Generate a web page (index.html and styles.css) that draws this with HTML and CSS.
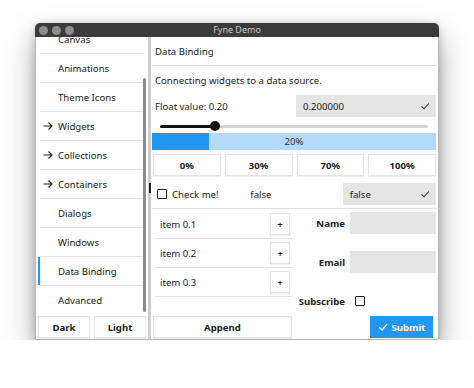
FILE: index.html
```
<!DOCTYPE html>
<html>
<head>
<meta charset="utf-8">
<link rel="stylesheet" href="styles.css">
</head>
<body>
<div class="stage">
  <div class="window">
    <div class="titlebar">
      <div class="lights"><span class="light"></span><span class="light"></span><span class="light"></span></div>
      <div class="title">Fyne Demo</div>
      <div></div>
    </div>
    <div class="main">
      <div class="sidebar">
        <div class="navlist">
          <div class="navinner">
            <div class="item">Canvas</div>
            <div class="item">Animations</div>
            <div class="item">Theme Icons</div>
            <div class="item"><svg class="arrow" viewBox="0 0 10 10"><path d="M0.5 5H9M5.5 1.5L9 5L5.5 8.5"/></svg>Widgets</div>
            <div class="item"><svg class="arrow" viewBox="0 0 10 10"><path d="M0.5 5H9M5.5 1.5L9 5L5.5 8.5"/></svg>Collections</div>
            <div class="item"><svg class="arrow" viewBox="0 0 10 10"><path d="M0.5 5H9M5.5 1.5L9 5L5.5 8.5"/></svg>Containers</div>
            <div class="item">Dialogs</div>
            <div class="item">Windows</div>
            <div class="item selected">Data Binding</div>
            <div class="item">Advanced</div>
          </div>
          <div class="scrollbar"></div>
        </div>
        <div class="themebtns">
          <div class="btn">Dark</div>
          <div class="btn">Light</div>
        </div>
      </div>
      <div class="divider"><span class="handle"></span></div>
      <div class="content">
        <div class="hdr">Data Binding</div>
        <div class="intro">Connecting widgets to a data source.</div>
        <div class="floatrow">
          <span class="lbl">Float value: 0.20</span>
          <div class="entry floatentry"><span>0.200000</span><svg class="check" viewBox="0 0 10 10"><path d="M1.5 5.3L4 7.8L8.8 2.5"/></svg></div>
        </div>
        <div class="slider">
          <div class="track"><div class="trackfill" style="width:20%"></div><div class="thumb"></div></div>
        </div>
        <div class="progress"><div class="progfill" style="width:20%"></div><span class="progtext">20%</span></div>
        <div class="pctbtns">
          <div class="btn">0%</div>
          <div class="btn">30%</div>
          <div class="btn">70%</div>
          <div class="btn">100%</div>
        </div>
        <div class="checkrow">
          <div class="checkcell"><span class="box"></span><span>Check me!</span></div>
          <div class="falselbl">false</div>
          <div class="entry"><span>false</span><svg class="check" viewBox="0 0 10 10"><path d="M1.5 5.3L4 7.8L8.8 2.5"/></svg></div>
        </div>
        <div class="sep"></div>
        <div class="lower">
          <div class="items">
            <div class="lrow"><span>item 0.1</span><div class="btn plus">+</div></div>
            <div class="lrow"><span>item 0.2</span><div class="btn plus">+</div></div>
            <div class="lrow"><span>item 0.3</span><div class="btn plus">+</div></div>
          </div>
          <div class="form">
            <div class="flabel">Name</div><div class="entry"></div>
            <div class="flabel">Email</div><div class="entry"></div>
            <div class="flabel">Subscribe</div><div class="subcell"><span class="box"></span></div>
          </div>
        </div>
        <div class="bottom">
          <div class="btn append">Append</div>
          <div class="submit"><svg class="subcheck" viewBox="0 0 10 10"><path d="M1.3 5.3L4 8L9 2.3"/></svg>Submit</div>
        </div>
      </div>
    </div>
  </div>
</div>
</body>
</html>
```
FILE: styles.css
```
html, body { margin: 0; padding: 0; background: #ffffff; }
body { font-family: "Noto Sans", "Open Sans", sans-serif; font-size: 9.6px; color: #222222; }

.stage { padding: 23px 0 0 35px; }

.window {
  width: 404px;
  height: 317px;
  display: flex;
  flex-direction: column;
  border-radius: 5px 5px 1px 1px;
  overflow: hidden;
  box-shadow: 0 14px 30px rgba(0,0,0,0.34), 0 2px 9px rgba(0,0,0,0.2);
}

.titlebar {
  height: 14px;
  background: #3b3b3b;
  display: grid;
  grid-template-columns: 1fr auto 1fr;
  align-items: center;
}
.lights { display: flex; gap: 4px; padding-left: 4px; }
.light { width: 9px; height: 9px; border-radius: 50%; background: #8d8d8d; }
.title { color: #c8c8c8; font-size: 9px; line-height: 14px; }

.main {
  flex: 1;
  display: flex;
  background: #ffffff;
  border: 1px solid #b8b8b8;
  border-top: none;
  min-height: 0;
}

.sidebar { width: 112px; display: flex; flex-direction: column; }
.navlist { position: relative; height: 275px; overflow: hidden; }
.navinner { margin-top: -12px; }
.item {
  height: 28px;
  margin: 0 4px;
  border-bottom: 1px solid #e3e3e3;
  display: flex;
  align-items: center;
  padding-left: 18px;
  position: relative;
  white-space: nowrap;
}
.item.selected::before {
  content: "";
  position: absolute;
  left: -2px; top: 0; bottom: 0;
  width: 2px;
  background: #2196f3;
}
.arrow { width: 10px; height: 10px; margin-left: -15px; margin-right: 5px; fill: none; stroke: #222; stroke-width: 1.2; }
.scrollbar {
  position: absolute;
  right: 2px; top: 41px; bottom: 0;
  width: 3px;
  border-radius: 2px;
  background: #8a8a8a;
}
.themebtns { display: flex; gap: 4px; padding: 4px 2px 0 2px; }
.themebtns .btn { flex: 1; height: 22px; }

.btn {
  box-sizing: border-box;
  background: #ffffff;
  border: 1px solid #e4e4e4;
  box-shadow: 0 1px 1px rgba(0,0,0,0.06);
  display: flex; align-items: center; justify-content: center;
  font-weight: bold;
  color: #222;
}

.divider { width: 3px; background: #cdcdcd; display: flex; align-items: center; justify-content: center; margin-right: 1px; }
.handle { width: 2px; height: 10px; background: #222; }

.content { flex: 1; display: flex; flex-direction: column; padding-right: 1px; min-width: 0; }
.hdr { height: 28px; border-bottom: 1px solid #dedede; display: flex; align-items: center; padding-left: 3px; }
.intro { height: 28px; display: flex; align-items: center; padding-left: 3px; }
.floatrow { margin-top: 1px; height: 22px; display: flex; align-items: center; padding-right: 1px; }
.lbl { padding-left: 3px; }
.entry {
  box-sizing: border-box;
  height: 22px;
  background: #e5e5e5;
  display: flex; align-items: center; justify-content: space-between;
  padding: 0 6px 0 7px;
}
.floatentry { width: 140px; margin-left: auto; }
.check { width: 10px; height: 10px; fill: none; stroke: #333; stroke-width: 1.1; }

.slider { margin-top: 2px; height: 14px; display: flex; align-items: center; padding: 0 9px 0 8px; }
.track { position: relative; flex: 1; height: 3px; background: #d4d4d4; border-radius: 2px; }
.trackfill { height: 3px; background: #111; border-radius: 2px; }
.thumb { position: absolute; left: 20%; top: 50%; width: 10px; height: 10px; margin: -5px 0 0 -4px; border-radius: 50%; background: #111; }

.progress { position: relative; height: 17px; background: #b3dafb; margin-right: 1px; display: flex; align-items: center; justify-content: center; }
.progfill { position: absolute; left: 0; top: 0; bottom: 0; background: #2196f3; }
.progtext { position: relative; color: #333; }

.pctbtns { margin: 4px 1px 0 1px; height: 22px; display: grid; grid-template-columns: repeat(4, 1fr); gap: 4px; }

.checkrow { margin-top: 7px; height: 22px; display: grid; grid-template-columns: 1fr 1fr 1fr; gap: 2px; padding-right: 1px; }
.checkcell { display: flex; align-items: center; padding-left: 5px; gap: 5px; }
.box { box-sizing: border-box; width: 10px; height: 10px; border: 1.3px solid #222; border-radius: 1px; display: inline-block; }
.falselbl { display: flex; align-items: center; padding-left: 3px; }

.sep { margin-top: 3px; height: 1px; background: #dedede; }

.lower { flex: 1; display: flex; gap: 4px; }
.items { width: 137px; margin-left: 3px; padding-top: 1px; }
.lrow { height: 28px; border-bottom: 1px solid #e3e3e3; display: flex; align-items: center; justify-content: space-between; padding: 0 2px 0 5px; }
.plus { width: 20px; height: 22px; font-size: 9px; }

.form { flex: 1; display: grid; grid-template-columns: 49px 1fr; grid-auto-rows: 22px; column-gap: 5px; row-gap: 17px; margin-top: 3px; padding-right: 1px; align-content: start; }
.flabel { font-weight: bold; display: flex; align-items: center; justify-content: flex-end; }
.subcell { display: flex; align-items: center; padding-left: 5px; }

.bottom { height: 22px; display: flex; justify-content: space-between; align-items: stretch; margin-bottom: 1px; }
.append { width: 139px; margin-left: 1px; }
.submit { width: 63px; margin-right: 4px; background: #2196f3; color: #ffffff; font-weight: bold; display: flex; align-items: center; justify-content: center; gap: 4px; }
.subcheck { width: 10px; height: 10px; fill: none; stroke: #fff; stroke-width: 1.3; }
```
